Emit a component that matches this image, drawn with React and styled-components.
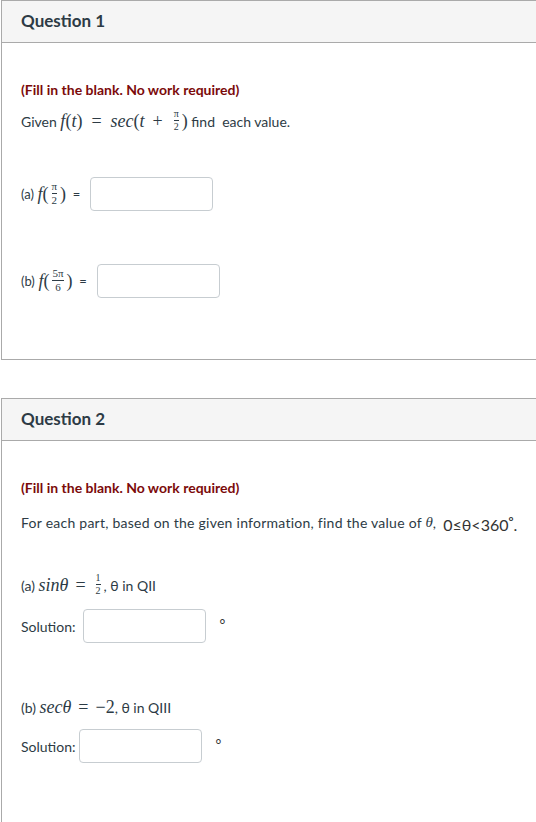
import React from "react";
import styled, { createGlobalStyle } from "styled-components";

const Global = createGlobalStyle`
  html, body {
    margin: 0;
    padding: 0;
    background: #fff;
    overflow: hidden;
  }
  body {
    font-family: Lato, "Noto Sans", sans-serif;
    color: #2d3b45;
  }
`;

const Page = styled.div`
  display: flex;
  flex-direction: column;
  gap: 38px;
  padding-left: 1px;
  margin-right: -6px;
`;

const Card = styled.section`
  border: 1px solid #aaa;
  border-right: none;
  height: ${(p) => p.$height}px;
  box-sizing: border-box;
`;

const Header = styled.header`
  height: 42px;
  box-sizing: border-box;
  background: #f5f5f5;
  border-bottom: 1px solid #aaa;
  display: flex;
  align-items: center;
  padding: 0 0 3px 19px;
  font-size: 17px;
  font-weight: 700;
  color: #2d3b45;
`;

const Body = styled.div`
  padding: 39px 19px 0;
  font-size: 14px;
`;

const Note = styled.p`
  margin: 0;
  height: 16px;
  line-height: 16px;
  font-size: 14px;
  font-weight: 700;
  color: #7b0a0a;
`;

const Line = styled.div`
  display: flex;
  align-items: center;
  height: 20px;
  margin-top: ${(p) => p.$top}px;
  white-space: nowrap;
  letter-spacing: ${(p) => p.$spread || 0}px;
`;

const Label = styled.span`
  font-size: ${(p) => p.$size || 14}px;
`;

const M = styled.span`
  font-family: "Liberation Serif", "DejaVu Serif", serif;
  font-style: ${(p) => (p.$upright ? "normal" : "italic")};
  font-size: ${(p) => p.$size || 18}px;
  letter-spacing: 0;
  margin: 0 ${(p) => p.$space || 0}px;
`;

const FracBox = styled.span`
  display: inline-flex;
  flex-direction: column;
  align-items: center;
  font-family: "Liberation Serif", "DejaVu Serif", serif;
  font-size: ${(p) => p.$size || 10}px;
  line-height: 1;
  margin: 0 ${(p) => p.$space || 3}px;
  transform: translateY(-1px);
`;

const FracBar = styled.span`
  align-self: stretch;
  border-top: 1px solid #2d3b45;
  margin: 1px 0;
`;

const Answer = styled.input`
  width: 123px;
  height: 34px;
  box-sizing: border-box;
  border: 1px solid #c7cdd1;
  border-radius: 4px;
  margin-left: ${(p) => p.$gap}px;
  background: #fff;
`;

const Row = styled.div`
  display: flex;
  align-items: center;
  margin-top: ${(p) => p.$top}px;
  height: 34px;
  white-space: nowrap;
`;

const Degree = styled.span`
  margin-left: 13px;
  font-size: 14px;
  transform: translateY(-3px);
  color: #333;
`;

const Range = styled.span`
  font-size: 16px;
  margin-left: 7px;
  letter-spacing: 0;
  color: #333;
  transform: translateY(2px);
  sup {
    font-size: 12px;
    font-weight: 700;
  }
`;

function Frac({ n, d, size, space }) {
  return (
    <FracBox $size={size} $space={space}>
      <span>{n}</span>
      <FracBar />
      <span>{d}</span>
    </FracBox>
  );
}

export default function App() {
  return (
    <>
      <Global />
      <Page>
        <Card $height={360}>
          <Header>Question 1</Header>
          <Body>
            <Note>(Fill in the blank. No work required)</Note>
            <Line $top={13}>
              Given&nbsp;<M>f</M>
              <M $upright>(</M>
              <M>t</M>
              <M $upright>)</M>
              <M $upright $space={9}>=</M>
              <M>sec</M>
              <M $upright>(</M>
              <M>t</M>
              <M $upright $space={8}>+</M>
              <Frac n="π" d="2" />
              <M $upright>)</M>
              &nbsp;find&nbsp; each value.
            </Line>
            <Row $top={46}>
              <Label $size={13}>(a)</Label>&nbsp;<M>f</M>
              <M $upright>(</M>
              <Frac n="π" d="2" size={11} space={3} />
              <M $upright>)</M>
              <Label $size={13}>&nbsp;&nbsp;=</Label>
              <Answer $gap={10} />
            </Row>
            <Row $top={53}>
              <Label $size={13}>(b)</Label>&nbsp;<M>f</M>
              <M $upright>(</M>
              <Frac n="5π" d="6" size={11} space={3} />
              <M $upright>)</M>
              <Label $size={13}>&nbsp;&nbsp;=</Label>
              <Answer $gap={10} />
            </Row>
          </Body>
        </Card>
        <Card $height={440}>
          <Header>Question 2</Header>
          <Body>
            <Note>(Fill in the blank. No work required)</Note>
            <Line $top={16} $spread={0.25}>
              For each part, based on the given information, find the value of&nbsp;
              <M $size={15}>θ</M>,
              <Range>
                0≤θ&lt;360<sup>°</sup>.
              </Range>
            </Line>
            <Line $top={43}>
              (a)&nbsp;<M>sinθ</M>
              <M $upright $space={7}>=</M>
              <Frac n="1" d="2" />, θ in QII
            </Line>
            <Row $top={14}>
              Solution:
              <Answer $gap={8} />
              <Degree>°</Degree>
            </Row>
            <Line $top={54}>
              (b)&nbsp;<M>secθ</M>
              <M $upright $space={7}>=</M>
              <M $upright>−2</M>, θ in QIII
            </Line>
            <Row $top={12}>
              Solution:
              <Answer $gap={4} />
              <Degree>°</Degree>
            </Row>
          </Body>
        </Card>
      </Page>
    </>
  );
}
